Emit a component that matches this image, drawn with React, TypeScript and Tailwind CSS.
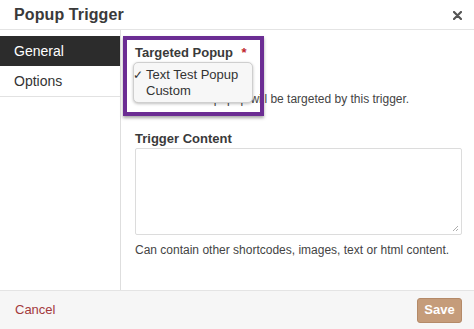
export default function App() {
  const font = { fontFamily: '"Liberation Sans", Arial, sans-serif' };

  return (
    <div className="w-[474px] h-[329px] flex flex-col bg-white text-[#3c3c3c] overflow-hidden" style={font}>
      {/* Header */}
      <div className="h-[30px] shrink-0 flex items-center justify-between pl-[14px] pr-[12px] border-b border-[#e4e4e4]">
        <h1 className="text-[16px] font-bold text-[#3a3a3a] tracking-[0.1px]">Popup Trigger</h1>
        <svg width="9" height="9" viewBox="0 0 9 9" className="mt-[1px]">
          <path d="M1 1 L8 8 M8 1 L1 8" stroke="#555" strokeWidth="2.2" strokeLinecap="round" />
        </svg>
      </div>

      {/* Body */}
      <div className="flex-1 flex min-h-0">
        <div className="w-[121px] shrink-0 border-r border-[#dedede] pt-[6px]">
          <div className="h-[30px] flex items-center pl-[14px] bg-[#2c2c2c] text-white text-[14px]">General</div>
          <div className="h-[31px] flex items-center pl-[14px] border-b border-[#e2e2e2] text-[14px] text-[#333]">Options</div>
        </div>

        <div className="flex-1 relative pl-[14px] pr-[12px] pt-[14px]">
          <div className="text-[13px] font-bold text-[#3a3a3a] leading-[17px]">
            Targeted Popup <span className="text-[#c0262d] ml-[5px]">*</span>
          </div>
          <div className="h-[31px]" />
          <p className="text-[12px] leading-[14px] text-[#444] whitespace-nowrap">Choose which popup will be targeted by this trigger.</p>

          <div className="mt-[24px] text-[13px] font-bold text-[#3a3a3a] leading-[17px]">Trigger Content</div>
          <div className="relative mt-[1px] h-[87px] border border-[#dcdcdc] rounded-[2px] bg-white">
            <svg width="7" height="7" viewBox="0 0 7 7" className="absolute right-[2px] bottom-[2px]">
              <path d="M6 1 L1 6 M6 4 L4 6" stroke="#999" strokeWidth="0.8" />
            </svg>
          </div>
          <p className="mt-[7px] text-[12px] leading-[16px] text-[#444] whitespace-nowrap">
            Can contain other shortcodes, images, text or html content.
          </p>

          {/* highlight box */}
          <div className="absolute left-[2px] top-[6px] w-[141px] h-[80px] border-[4px] border-[#6b2d93] shadow-[0_2px_3px_rgba(0,0,0,0.35)] pointer-events-none" />

          {/* open dropdown */}
          <div className="absolute left-[12px] top-[32px] w-[120px] h-[41px] bg-[#f7f7f7] border border-[#cfcfcf] rounded-[5px] shadow-[0_1px_3px_rgba(0,0,0,0.25)] text-[13px] text-[#333] pt-[4px]">
            <div className="flex items-center h-[16px] leading-[16px]">
              <span className="w-[12px] text-center ml-[-2px] text-[12px]">✓</span>
              <span className="ml-[2px]">Text Test Popup</span>
            </div>
            <div className="h-[16px] leading-[16px] pl-[12px]">Custom</div>
          </div>
        </div>
      </div>

      {/* Footer */}
      <div className="h-[39px] shrink-0 flex items-center justify-between pl-[15px] pr-[12px] bg-[#f6f6f6] border-t border-[#e4e4e4]">
        <span className="text-[13px] text-[#a3393d]">Cancel</span>
        <button className="h-[25px] w-[45px] rounded-[3px] bg-[#c59c7a] text-white text-[13px] font-bold border border-[#b48a68]">
          Save
        </button>
      </div>
    </div>
  );
}
